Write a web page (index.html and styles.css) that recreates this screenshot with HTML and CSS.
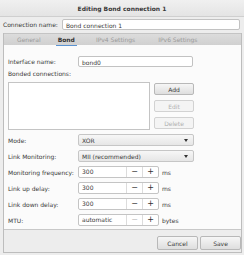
FILE: index.html
```html
<!DOCTYPE html>
<html lang="en">
<head>
    <meta charset="UTF-8">
    <title>Editing Bond connection 1</title>
    <link rel="stylesheet" href="styles.css">
</head>
<body>
    <div class="titlebar">Editing Bond connection 1</div>

    <div class="name-row">
        <span class="label">Connection name:</span>
        <div class="entry wide">Bond connection 1</div>
    </div>

    <div class="frame">
        <div class="tabs">
            <span class="tab t-general">General</span>
            <span class="tab t-bond active">Bond</span>
            <span class="tab t-ipv4">IPv4 Settings</span>
            <span class="tab t-ipv6">IPv6 Settings</span>
        </div>

        <div class="page">
            <div class="row">
                <span class="label">Interface name:</span>
                <div class="entry iface">bond0</div>
            </div>

            <div class="bonded-label">Bonded connections:</div>
            <div class="bonded">
                <div class="list"></div>
                <div class="list-buttons">
                    <button class="btn">Add</button>
                    <button class="btn" disabled>Edit</button>
                    <button class="btn" disabled>Delete</button>
                </div>
            </div>

            <div class="row">
                <span class="label">Mode:</span>
                <div class="combo">XOR<span class="arrow"></span></div>
            </div>
            <div class="row">
                <span class="label">Link Monitoring:</span>
                <div class="combo">MII (recommended)<span class="arrow"></span></div>
            </div>
            <div class="row">
                <span class="label">Monitoring frequency:</span>
                <div class="spin"><span class="value">300</span><span class="sb">&minus;</span><span class="sb">+</span></div>
                <span class="unit">ms</span>
            </div>
            <div class="row">
                <span class="label">Link up delay:</span>
                <div class="spin"><span class="value">300</span><span class="sb">&minus;</span><span class="sb">+</span></div>
                <span class="unit">ms</span>
            </div>
            <div class="row">
                <span class="label">Link down delay:</span>
                <div class="spin"><span class="value">300</span><span class="sb">&minus;</span><span class="sb">+</span></div>
                <span class="unit">ms</span>
            </div>
            <div class="row">
                <span class="label">MTU:</span>
                <div class="spin"><span class="value">automatic</span><span class="sb off">&minus;</span><span class="sb">+</span></div>
                <span class="unit">bytes</span>
            </div>
        </div>

        <div class="actions">
            <button class="btn big">Cancel</button>
            <button class="btn big">Save</button>
        </div>
    </div>
</body>
</html>
```

FILE: styles.css
```css
body {
    margin: 0;
    width: 244px;
    height: 255px;
    overflow: hidden;
    background: #ededed;
    font-family: "DejaVu Sans", sans-serif;
    font-size: 6px;
    color: #3a3a3a;
}
.titlebar {
    height: 17px;
    line-height: 17px;
    text-align: center;
    font-weight: bold;
    background: linear-gradient(#f0f0f0, #e4e4e4);
    border-bottom: 1px solid #cfcfcf;
    box-sizing: border-box;
}
.name-row {
    display: flex;
    align-items: center;
    padding: 2px 3px 3px 3px;
    height: 16px;
    box-sizing: border-box;
}
.name-row .label {
    width: 59px;
}
.entry {
    height: 11px;
    line-height: 11px;
    background: #fff;
    border: 1px solid #c2c2c2;
    border-radius: 2px;
    padding: 0 3px;
    box-sizing: border-box;
}
.entry.wide {
    flex: 1;
    margin-right: 1px;
}
.frame {
    margin: 0 2px 0 3px;
    border: 1px solid #bdbdbd;
    border-top: none;
    height: 220px;
    box-sizing: border-box;
}
.tabs {
    display: flex;
    height: 12px;
    line-height: 12px;
    background: linear-gradient(#dcdcdc, #d0d0d0);
    border-top: 1px solid #c4c4c4;
    box-sizing: border-box;
}
.tab {
    color: #9a9a9a;
    position: relative;
}
.t-general { margin-left: 13px; }
.t-bond { margin-left: 17px; }
.t-ipv4 { margin-left: 21px; }
.t-ipv6 { margin-left: 23px; }
.tab.active {
    color: #333;
    font-weight: bold;
}
.tab.active::after {
    content: "";
    position: absolute;
    left: -2px;
    right: -2px;
    bottom: -1px;
    height: 1px;
    background: #5b93d1;
}
.page {
    background: #fbfbfb;
    border-bottom: 1px solid #c8c8c8;
    padding: 10px 0 0 4px;
    height: 185px;
    box-sizing: border-box;
}
.row {
    display: flex;
    align-items: center;
    height: 12px;
    margin-bottom: 4px;
}
.row .label {
    width: 70px;
    flex: none;
}
.entry.iface {
    width: 115px;
}
.bonded-label {
    margin-top: -1px;
    height: 9px;
}
.bonded {
    display: flex;
    margin-top: 3px;
    margin-bottom: 4px;
}
.list {
    width: 142px;
    height: 48px;
    background: #fff;
    border: 1px solid #c4c4c4;
    box-sizing: border-box;
}
.list-buttons {
    display: flex;
    flex-direction: column;
    gap: 5px;
    margin-left: 4px;
    padding-top: 1px;
}
.btn {
    width: 40px;
    height: 12px;
    padding: 0;
    font-family: inherit;
    font-size: 6px;
    color: #3a3a3a;
    background: linear-gradient(#f6f6f6, #dedede);
    border: 1px solid #b8b8b8;
    border-radius: 2px;
}
.btn:disabled {
    color: #b0b0b0;
    background: #f4f4f4;
    border-color: #d2d2d2;
}
.combo {
    position: relative;
    width: 116px;
    height: 12px;
    line-height: 12px;
    padding: 0 3px;
    box-sizing: border-box;
    background: linear-gradient(#f7f7f7, #e6e6e6);
    border: 1px solid #c6c6c6;
    border-radius: 2px;
}
.arrow {
    position: absolute;
    right: 5px;
    top: 4px;
    border-left: 2px solid transparent;
    border-right: 2px solid transparent;
    border-top: 3px solid #333;
}
.spin {
    display: flex;
    width: 81px;
    height: 12px;
    line-height: 10px;
    background: #fff;
    border: 1px solid #c4c4c4;
    border-radius: 2px;
    box-sizing: border-box;
}
.spin .value {
    flex: 1;
    padding-left: 3px;
}
.spin .sb {
    width: 15px;
    text-align: center;
    font-size: 8px;
    border-left: 1px solid #dcdcdc;
    color: #333;
}
.spin .sb.off {
    color: #c0c0c0;
}
.unit {
    margin-left: 3px;
}
.actions {
    display: flex;
    justify-content: flex-end;
    gap: 2px;
    padding: 6px 0 0 0;
}
.btn.big {
    width: 41px;
    height: 14px;
}
```
